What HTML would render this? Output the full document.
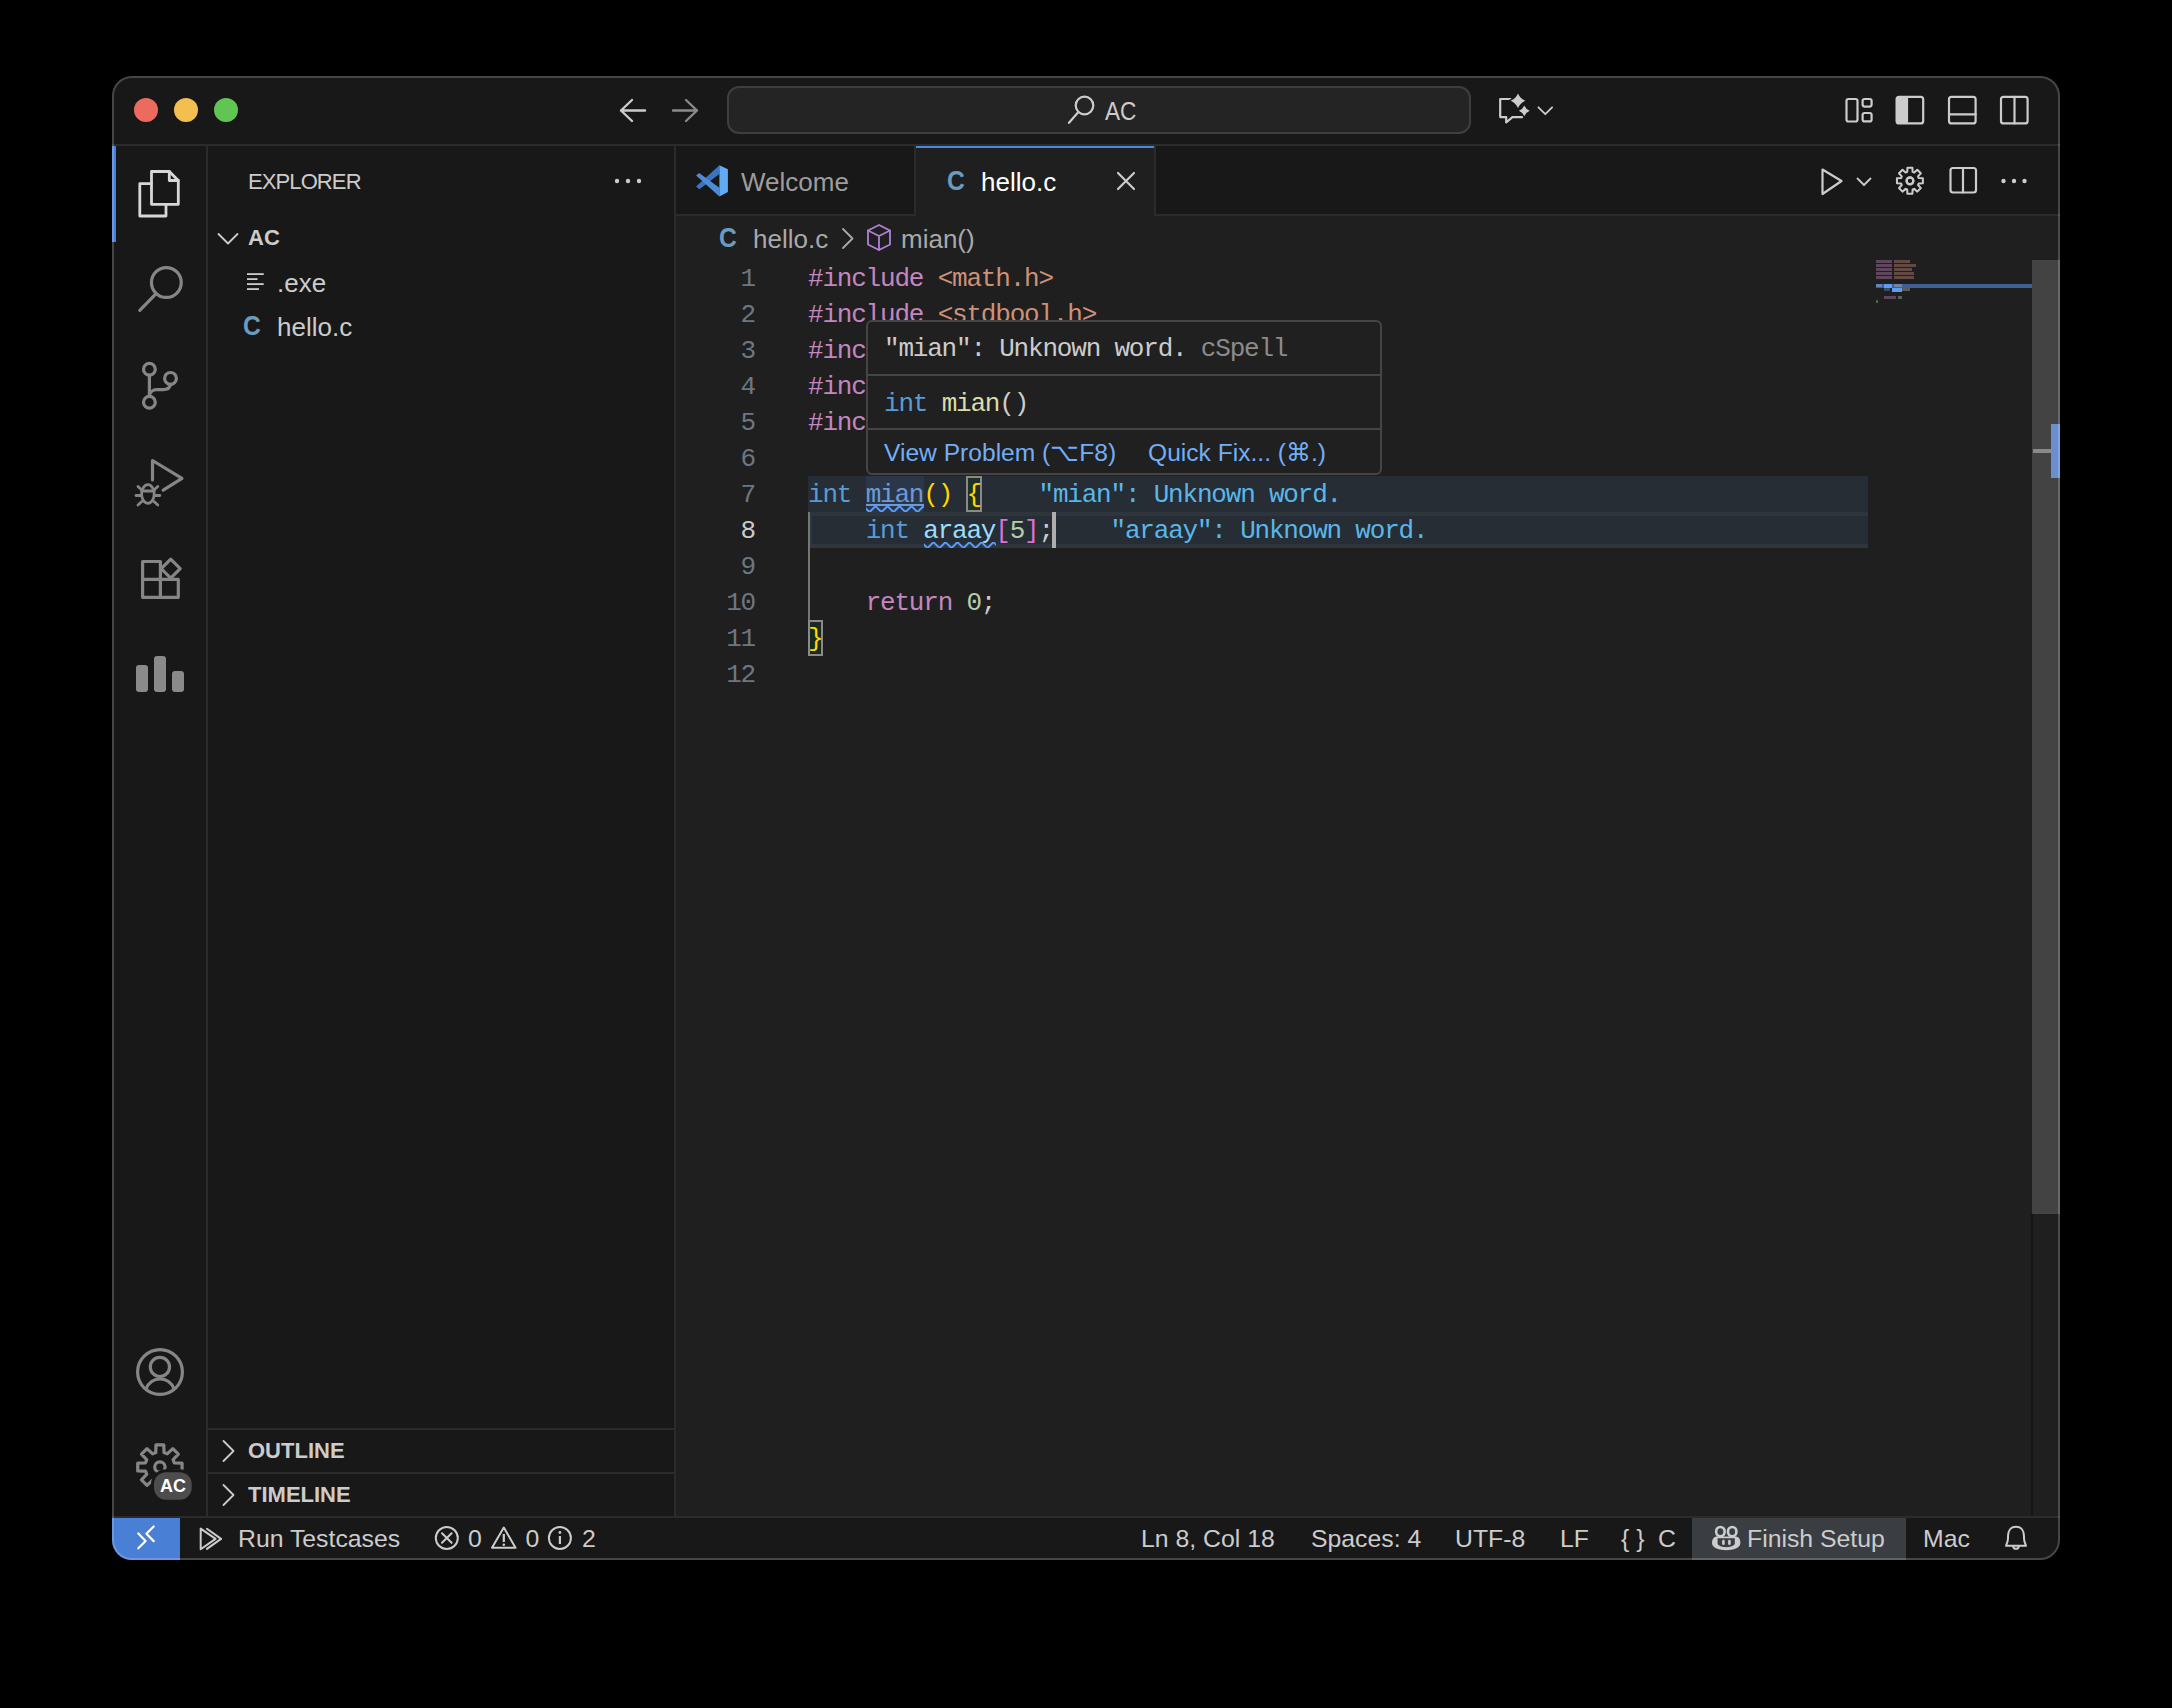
<!DOCTYPE html>
<html><head><meta charset="utf-8">
<style>
*{margin:0;padding:0;box-sizing:border-box}
html,body{width:2172px;height:1708px;background:#000;overflow:hidden;font-family:"Liberation Sans",sans-serif;color:#cccccc}
.a{position:absolute}
#win{position:absolute;left:0;top:0;width:2172px;height:1708px;clip-path:inset(76px 112px 148px 112px round 20px);background:#181818}
#winb{position:absolute;left:112px;top:76px;width:1948px;height:1484px;border-radius:20px;border:2px solid rgba(255,255,255,0.2)}
.mono{font-family:"Liberation Mono",monospace}
.t{position:absolute;white-space:pre;line-height:1}
svg{position:absolute;overflow:visible}
.ic{fill:none;stroke:#cccccc;stroke-width:2.6;stroke-linecap:round;stroke-linejoin:round}
.cl{font-size:26px;letter-spacing:-1.20px;line-height:36px}
.cic{font-weight:bold;font-size:28px;color:#6b9cc0;transform:scaleX(.88);transform-origin:0 0}
.ig{fill:none;stroke:#868686;stroke-width:3;stroke-linecap:round;stroke-linejoin:round}
</style></head><body>
<div id="win">
  <!-- borders -->
  <div class="a" style="left:112px;top:144px;width:1948px;height:2px;background:#2b2b2b"></div>
  <div class="a" style="left:206px;top:146px;width:2px;height:1370px;background:#2b2b2b"></div>
  <div class="a" style="left:674px;top:146px;width:2px;height:1370px;background:#2b2b2b"></div>
  <div class="a" style="left:208px;top:1428px;width:466px;height:2px;background:#2b2b2b"></div>
  <div class="a" style="left:208px;top:1472px;width:466px;height:2px;background:#2b2b2b"></div>
  <!-- editor -->
  <div class="a" style="left:676px;top:146px;width:1384px;height:1370px;background:#1f1f1f"></div>
  <!-- tab bar -->
  <div class="a" style="left:676px;top:146px;width:1384px;height:70px;background:#181818"></div>
  <div class="a" style="left:676px;top:214px;width:1384px;height:2px;background:#2b2b2b"></div>
  <div class="a" style="left:914px;top:146px;width:2px;height:70px;background:#2b2b2b"></div>
  <div class="a" style="left:916px;top:146px;width:238px;height:70px;background:#1f1f1f"></div>
  <div class="a" style="left:916px;top:146px;width:238px;height:2px;background:#4d86e0"></div>
  <div class="a" style="left:1154px;top:146px;width:2px;height:70px;background:#2b2b2b"></div>
  <!-- status bar -->
  <div class="a" style="left:112px;top:1516px;width:1948px;height:2px;background:#2b2b2b"></div>
  <div class="a" style="left:112px;top:1518px;width:68px;height:42px;background:#4a7fd6"></div>
  <div class="a" style="left:1692px;top:1518px;width:214px;height:42px;background:#3a3d41"></div>

  <!-- titlebar -->
  <div class="a" style="left:134px;top:98px;width:24px;height:24px;border-radius:50%;background:#ec6a5e"></div>
  <div class="a" style="left:174px;top:98px;width:24px;height:24px;border-radius:50%;background:#f3bf4f"></div>
  <div class="a" style="left:214px;top:98px;width:24px;height:24px;border-radius:50%;background:#61c554"></div>
  <svg width="2172" height="1708" style="left:0;top:0">
    <g class="ic" style="stroke:#cccccc;stroke-width:2.4">
      <path d="M621 110.5 H645 M632 100 L621 110.5 L632 121"/>
    </g>
    <g class="ic" style="stroke:#8a8a8a;stroke-width:2.4">
      <path d="M673 110.5 H697 M686 100 L697 110.5 L686 121"/>
    </g>
  </svg>
  <div class="a" style="left:727px;top:86px;width:744px;height:48px;border-radius:12px;background:#242424;border:2px solid #3e3e3e"></div>
  <svg width="2172" height="1708" style="left:0;top:0">
    <g class="ic" style="stroke:#cccccc;stroke-width:2.2">
      <circle cx="1084.5" cy="105.5" r="8.8"/>
      <path d="M1078.2 112.3 L1069 122.8"/>
    </g>
  </svg>
  <div class="t" style="left:1105px;top:97.5px;font-size:26px;color:#cccccc;transform:scaleX(.87);transform-origin:0 0">AC</div>

  <svg width="2172" height="1708" style="left:0;top:0">
    <g class="ic" style="stroke-width:2.2">
      <path d="M1510.5 99 H1500.2 V117.1 H1506.2 V122.5 L1512.4 117.1 H1522.5"/>
      <path d="M1538.4 107.3 L1545.3 114.2 L1552.1 107.3" style="stroke-width:1.8"/>
      <rect x="1846.5" y="99" width="11" height="22.5" rx="2"/>
      <rect x="1862.6" y="99" width="9" height="7.6" rx="2"/>
      <rect x="1862.6" y="113" width="9" height="8.4" rx="2"/>
      <rect x="1896.6" y="96.8" width="26.6" height="26.6" rx="2.5"/>
      <rect x="1949" y="96.8" width="26.6" height="26.6" rx="2.5"/>
      <path d="M1949 114.4 H1975.6"/>
      <rect x="2001" y="96.8" width="26.6" height="26.6" rx="2.5"/>
      <path d="M2014.5 96.8 V123.4"/>
    </g>
    <g style="fill:#cccccc">
      <path d="M1518 93.39999999999999 Q1520.22 98.58 1525.4 100.8 Q1520.22 103.02 1518 108.2 Q1515.78 103.02 1510.6 100.8 Q1515.78 98.58 1518 93.39999999999999Z" stroke="#181818" stroke-width="3"/>
      <path d="M1524.3 105.39999999999999 Q1525.9199999999998 109.17999999999999 1529.7 110.8 Q1525.9199999999998 112.42 1524.3 116.2 Q1522.68 112.42 1518.8999999999999 110.8 Q1522.68 109.17999999999999 1524.3 105.39999999999999Z" stroke="#181818" stroke-width="3"/>
      <path d="M1518 93.39999999999999 Q1520.22 98.58 1525.4 100.8 Q1520.22 103.02 1518 108.2 Q1515.78 103.02 1510.6 100.8 Q1515.78 98.58 1518 93.39999999999999Z"/>
      <path d="M1524.3 105.39999999999999 Q1525.9199999999998 109.17999999999999 1529.7 110.8 Q1525.9199999999998 112.42 1524.3 116.2 Q1522.68 112.42 1518.8999999999999 110.8 Q1522.68 109.17999999999999 1524.3 105.39999999999999Z"/>
      <rect x="1896.6" y="96.8" width="11.5" height="26.6" rx="2.5"/>
    </g>
    <g style="fill:#181818;stroke:none">
    </g>
  </svg>
<div class="a" style="left:808px;top:476px;width:1060px;height:36px;background:#262d35"></div>
<div class="a" style="left:808px;top:512px;width:1060px;height:36px;background:#262d35;border:4px solid #2e353d;border-right:none"></div>
<div class="a" style="left:866px;top:476px;width:58px;height:36px;background:#2b3748"></div>
<div class="a" style="left:966px;top:476px;width:16px;height:36px;background:#1f3029;border:2px solid #8a8a8a"></div>
<div class="a" style="left:808px;top:620px;width:15px;height:36px;background:#1a2a1e;border:2px solid #8a8a8a"></div>
<div class="a" style="left:808px;top:512px;width:2px;height:108px;background:#767676"></div>
<div class="t mono cl" style="left:656px;width:99px;text-align:right;top:261px;color:#6e7681">1</div>
<div class="t mono cl" style="left:656px;width:99px;text-align:right;top:297px;color:#6e7681">2</div>
<div class="t mono cl" style="left:656px;width:99px;text-align:right;top:333px;color:#6e7681">3</div>
<div class="t mono cl" style="left:656px;width:99px;text-align:right;top:369px;color:#6e7681">4</div>
<div class="t mono cl" style="left:656px;width:99px;text-align:right;top:405px;color:#6e7681">5</div>
<div class="t mono cl" style="left:656px;width:99px;text-align:right;top:441px;color:#6e7681">6</div>
<div class="t mono cl" style="left:656px;width:99px;text-align:right;top:477px;color:#6e7681">7</div>
<div class="t mono cl" style="left:656px;width:99px;text-align:right;top:513px;color:#cccccc">8</div>
<div class="t mono cl" style="left:656px;width:99px;text-align:right;top:549px;color:#6e7681">9</div>
<div class="t mono cl" style="left:656px;width:99px;text-align:right;top:585px;color:#6e7681">10</div>
<div class="t mono cl" style="left:656px;width:99px;text-align:right;top:621px;color:#6e7681">11</div>
<div class="t mono cl" style="left:656px;width:99px;text-align:right;top:657px;color:#6e7681">12</div>
<div class="t mono cl" style="left:808px;top:261px"><span style="color:#c586c0">#include</span><span style="color:#cccccc"> </span><span style="color:#ce9178">&lt;math.h&gt;</span></div>
<div class="t mono cl" style="left:808px;top:297px"><span style="color:#c586c0">#include</span><span style="color:#cccccc"> </span><span style="color:#ce9178">&lt;stdbool.h&gt;</span></div>
<div class="t mono cl" style="left:808px;top:333px"><span style="color:#c586c0">#include</span><span style="color:#cccccc"> </span><span style="color:#ce9178">&lt;stdio.h&gt;</span></div>
<div class="t mono cl" style="left:808px;top:369px"><span style="color:#c586c0">#include</span><span style="color:#cccccc"> </span><span style="color:#ce9178">&lt;stdlib.h&gt;</span></div>
<div class="t mono cl" style="left:808px;top:405px"><span style="color:#c586c0">#include</span><span style="color:#cccccc"> </span><span style="color:#ce9178">&lt;string.h&gt;</span></div>
<div class="t mono cl" style="left:808px;top:477px"><span style="color:#569cd6">int</span><span style="color:#cccccc"> </span><span style="color:#6b9bd6">mian</span><span style="color:#ffd700">()</span><span style="color:#cccccc"> </span><span style="color:#ffd700">{</span><span style="color:#cccccc">    </span><span style="color:#59b7e9">"mian": Unknown word.</span></div>
<div class="t mono cl" style="left:808px;top:513px"><span style="color:#cccccc">    </span><span style="color:#569cd6">int</span><span style="color:#cccccc"> </span><span style="color:#9cdcfe">araay</span><span style="color:#da70d6">[</span><span style="color:#b5cea8">5</span><span style="color:#da70d6">]</span><span style="color:#cccccc">;</span><span style="color:#cccccc">    </span><span style="color:#59b7e9">"araay": Unknown word.</span></div>
<div class="t mono cl" style="left:808px;top:585px"><span style="color:#cccccc">    </span><span style="color:#c586c0">return</span><span style="color:#cccccc"> </span><span style="color:#b5cea8">0</span><span style="color:#cccccc">;</span></div>
<div class="t mono cl" style="left:808px;top:621px"><span style="color:#ffd700">}</span></div>
<div class="a" style="left:866px;top:504px;width:58px;height:2px;background:#6b9ad8"></div>
<svg width="2172" height="1708" style="left:0;top:0"><defs><pattern id="sq" x="866" y="506" width="12" height="6" patternUnits="userSpaceOnUse"><g fill="#5c9cf8"><polygon points="11,0 5,6 2.2,6 8.2,0"/><polygon points="8,0 12,4 12,1.2 10.8,0"/><polygon points="0,4 2,6 4.8,6 0,1.2"/></g></pattern>
<pattern id="sq2" x="924" y="542" width="12" height="6" patternUnits="userSpaceOnUse"><g fill="#5c9cf8"><polygon points="11,0 5,6 2.2,6 8.2,0"/><polygon points="8,0 12,4 12,1.2 10.8,0"/><polygon points="0,4 2,6 4.8,6 0,1.2"/></g></pattern></defs>
<rect x="866" y="506" width="58" height="6" fill="url(#sq)"/><rect x="924" y="542" width="72" height="6" fill="url(#sq2)"/></svg>
<div class="a" style="left:1052px;top:512px;width:4px;height:36px;background:#aeafad"></div>
<div class="a" style="left:866px;top:320px;width:516px;height:155px;background:#202020;border:2px solid #454545;border-radius:6px"></div>
<div class="a" style="left:868px;top:374px;width:512px;height:2px;background:#454545"></div>
<div class="a" style="left:868px;top:428px;width:512px;height:2px;background:#454545"></div>
<div class="t mono cl" style="left:884px;top:330.5px;color:#cccccc">"mian": Unknown word. <span style="color:#8b8b8b">cSpell</span></div>
<div class="t mono cl" style="left:884px;top:385.5px"><span style="color:#569cd6">int</span> <span style="color:#dcdcaa">mian</span><span style="color:#cccccc">()</span></div>
<div class="t" style="left:884px;top:441px;font-size:24.6px;color:#72aef8">View Problem (⌥F8)</div>
<div class="t" style="left:1148px;top:441px;font-size:24.6px;color:#72aef8">Quick Fix... (⌘.)</div>
<div class="t" style="left:248px;top:170.5px;font-size:22px;letter-spacing:-0.9px;color:#cccccc">EXPLORER</div>
<svg width="2172" height="1708" style="left:0;top:0"><g fill="#cccccc">
<circle cx="617" cy="181" r="2.2"/><circle cx="628" cy="181" r="2.2"/><circle cx="639" cy="181" r="2.2"/>
</g>
<g class="ic" style="stroke-width:1.8">
<path d="M218.5 234 L228 243.5 L237.5 234"/>
<path d="M223.5 1441 L233.5 1451 L223.5 1461"/>
<path d="M223.5 1485 L233.5 1495 L223.5 1505"/>
</g>
<g fill="#cccccc">
<rect x="247" y="273.2" width="16.7" height="1.8"/>
<rect x="247" y="278.2" width="10.5" height="1.8"/>
<rect x="247" y="283.2" width="16.7" height="1.8"/>
<rect x="247" y="288.2" width="12" height="1.8"/>
</g>
</svg>
<div class="t" style="left:248px;top:227.3px;font-size:22px;font-weight:bold;color:#cccccc">AC</div>
<div class="t" style="left:277px;top:269.8px;font-size:26px;color:#cccccc">.exe</div>
<div class="t cic" style="left:242.5px;top:311.5px">C</div>
<div class="t" style="left:277px;top:313.8px;font-size:26px;color:#cccccc">hello.c</div>
<div class="t" style="left:248px;top:1440.3px;font-size:22px;font-weight:bold;color:#cccccc">OUTLINE</div>
<div class="t" style="left:248px;top:1484.4px;font-size:22px;font-weight:bold;color:#cccccc">TIMELINE</div>
<div class="t" style="left:741px;top:169px;font-size:26px;color:#9d9d9d">Welcome</div>
<div class="t cic" style="left:947px;top:167px">C</div>
<div class="t" style="left:981px;top:169px;font-size:26px;color:#ffffff">hello.c</div>
<svg width="2172" height="1708" style="left:0;top:0">
<path d="M719.4 165.2 L696.1 186.6 L699.4 189.3 L719.4 174 Z" fill="#3a74bf"/>
<path d="M719.4 196.6 L696.1 175.5 L699.2 173 L719.4 187.8 Z" fill="#4c8bd8"/>
<path d="M719.4 165.2 L727.9 169.3 L727.9 192 L719.4 196.6 Z" fill="#64aaf2"/>
<g class="ic" style="stroke:#cccccc;stroke-width:2.2"><path d="M1118 173 L1134 189 M1134 173 L1118 189"/></g>
</svg>
<div class="t cic" style="left:719px;top:223.5px">C</div>
<div class="t" style="left:753px;top:226px;font-size:26px;color:#a9a9a9">hello.c</div>
<div class="t" style="left:901px;top:226px;font-size:26px;color:#a9a9a9">mian()</div>
<svg width="2172" height="1708" style="left:0;top:0">
<g class="ic" style="stroke:#a9a9a9;stroke-width:1.8"><path d="M843 229 L852.5 238.5 L843 248"/></g>
<g class="ic" style="stroke:#b180d7;stroke-width:1.8">
<path d="M879 225 L890 230.5 L890 244.5 L879 250 L868 244.5 L868 230.5 Z"/>
<path d="M868 230.5 L879 236 L890 230.5 M879 236 V250"/>
</g>
</svg>
<svg width="2172" height="1708" style="left:0;top:0">
<g class="ic" style="stroke-width:2.2">
<path d="M1822.5 169.5 L1841.5 181 L1822.5 194 Z"/>
<path d="M1857.5 178.5 L1864 185 L1870.5 178.5" style="stroke-width:1.8"/>
<rect x="1950.5" y="168" width="25.5" height="24.5" rx="2.5"/>
<path d="M1963 168 V192.5"/>
<circle cx="1910" cy="181" r="3.4"/>
</g>
<g fill="#cccccc"><circle cx="2003.5" cy="181" r="2.2"/><circle cx="2014" cy="181" r="2.2"/><circle cx="2024.5" cy="181" r="2.2"/></g>
</svg>
<svg width="2172" height="1708" style="left:0;top:0">
<g class="ic" style="stroke:#d7d7d7;stroke-width:2.8">
  <path d="M151.5 183.7 H139.8 V216 H166 V204.5"/>
  <path d="M151.5 171.5 H169.3 L178.3 180.5 V204.3 H151.5 Z"/>
  <path d="M169.3 171.5 V180.5 H178.3"/>
</g>
<g class="ig" style="stroke-width:3.2">
  <circle cx="166.35" cy="282.5" r="14.9"/>
  <path d="M139.8 310.3 L155.6 294.2"/>
  <circle cx="149.4" cy="369.2" r="5.9"/>
  <circle cx="170.5" cy="378.4" r="5.9"/>
  <circle cx="149.4" cy="402.2" r="5.9"/>
  <path d="M149.4 375.1 V396.3"/>
  <path d="M170.5 384.3 C170 388.2 167 389.7 163 389.7 H157 C152.5 389.7 149.6 392.5 149.4 396"/>
  <path d="M152.5 480 V460.5 L182 478.3 L163.2 490.2"/>
  <path d="M142.6 561.5 H160.4 V597.3 H142.6 Z M142.6 579.4 H178.3 V597.3 H160.4"/>
  <path d="M170.7 559.2 L180.2 568.7 L170.7 578.2 L161.2 568.7 Z"/>
  <circle cx="160" cy="1372" r="22.4"/>
  <circle cx="159.9" cy="1366.9" r="9.6"/>
  <path d="M146.3 1388.5 A14.6 14.6 0 0 1 173.8 1388.5"/>
</g>
<g class="ig" style="stroke-width:2.8">
  <ellipse cx="147.9" cy="494" rx="6.3" ry="9.3"/>
  <path d="M141.6 491 H154.2"/>
  <path d="M138 486.5 L141.8 490 M157.8 486.5 L154 490 M136 495.5 H141 M154.8 495.5 H159.8 M138 505 L141.8 501.5 M157.8 505 L154 501.5"/>
</g>
<g fill="#8a8a8a">
  <rect x="136" y="665" width="12" height="27" rx="3"/>
  <rect x="154" y="656" width="12" height="36" rx="3"/>
  <rect x="172" y="671" width="12" height="21" rx="3"/>
</g>
<g class="ig" style="stroke-width:3.2">
  <path d="M155.77 1452.58 L155.99 1444.84 L163.81 1444.84 L164.03 1452.58 L167.17 1453.88 L172.81 1448.57 L178.33 1454.09 L173.02 1459.73 L174.32 1462.87 L182.06 1463.09 L182.06 1470.91 L174.32 1471.13 L173.02 1474.27 L178.33 1479.91 L172.81 1485.43 L167.17 1480.12 L164.03 1481.42 L163.81 1489.16 L155.99 1489.16 L155.77 1481.42 L152.63 1480.12 L146.99 1485.43 L141.47 1479.91 L146.78 1474.27 L145.48 1471.13 L137.74 1470.91 L137.74 1463.09 L145.48 1462.87 L146.78 1459.73 L141.47 1454.09 L146.99 1448.57 L152.63 1453.88Z"/>
  <circle cx="159.9" cy="1467" r="5.2"/>
</g>
<rect x="151" y="1469.2" width="43.7" height="33.6" rx="15" fill="#181818"/>
<rect x="154" y="1472.2" width="37.7" height="27.6" rx="12" fill="#4d4d4d"/>
<g class="ic" style="stroke-width:2">
  <path d="M1907.21 171.90 L1907.38 167.74 L1912.42 167.74 L1912.59 171.90 L1914.22 172.58 L1917.28 169.76 L1920.84 173.32 L1918.02 176.38 L1918.70 178.01 L1922.86 178.18 L1922.86 183.22 L1918.70 183.39 L1918.02 185.02 L1920.84 188.08 L1917.28 191.64 L1914.22 188.82 L1912.59 189.50 L1912.42 193.66 L1907.38 193.66 L1907.21 189.50 L1905.58 188.82 L1902.52 191.64 L1898.96 188.08 L1901.78 185.02 L1901.10 183.39 L1896.94 183.22 L1896.94 178.18 L1901.10 178.01 L1901.78 176.38 L1898.96 173.32 L1902.52 169.76 L1905.58 172.58Z"/>
  <circle cx="1909.9" cy="180.7" r="3.4"/>
</g>
</svg>
<div class="t" style="left:160px;top:1477px;font-size:18px;font-weight:bold;color:#ffffff">AC</div>
<svg width="2172" height="1708" style="left:0;top:0">
<g class="ic" style="stroke:#ffffff;stroke-width:2.2">
  <path d="M138.3 1533.5 L145.6 1541 L138.3 1548.3 M153.7 1526.5 L146.4 1533.8 L153.7 1541.1"/>
</g>
<g class="ic" style="stroke-width:2">
  <path d="M200.7 1528.6 V1549.3 L215.6 1538.9 Z"/>
  <path d="M206.9 1528.8 L221.1 1538.9 L206.9 1548.9"/>
  <circle cx="446.8" cy="1538" r="11"/>
  <path d="M442 1533.2 L451.6 1542.8 M451.6 1533.2 L442 1542.8"/>
  <path d="M503.8 1527.5 L515.5 1547.8 H492 Z"/>
  <circle cx="559.9" cy="1538" r="11"/>
  <path d="M2016 1526.8 C2010.5 1526.8 2008 1531 2008 1536 V1538.5 C2008 1541 2007 1543.5 2006 1545.8 H2026 C2025 1543.5 2024 1541 2024 1538.5 V1536 C2024 1531 2021.5 1526.8 2016 1526.8 Z"/>
  <path d="M2013.2 1546.3 C2013.5 1549.6 2018.5 1549.6 2018.8 1546.3"/>
</g>
<g fill="#cccccc">
  <rect x="502.7" y="1534" width="2.2" height="8"/><circle cx="503.8" cy="1544.7" r="1.3"/>
  <rect x="558.8" y="1536" width="2.2" height="8"/><circle cx="559.9" cy="1532.5" r="1.4"/>
</g>
<g fill="#cccccc"><path d="M1712 1543 C1712 1538.5 1714.5 1536.5 1717 1536.5 H1735.4 C1738 1536.5 1740.4 1538.5 1740.4 1543 C1740.4 1548 1733 1550.2 1726.2 1550.2 C1719.4 1550.2 1712 1548 1712 1543 Z"/></g>
<g fill="#3a3d41"><path d="M1717.6 1538.3 H1734.8 V1543.3 C1734.8 1545.8 1730 1547.2 1726.2 1547.2 C1722.4 1547.2 1717.6 1545.8 1717.6 1543.3 Z"/></g>
<g fill="#3a3d41" stroke="#cccccc" stroke-width="2.6"><rect x="1716.2" y="1527" width="8.4" height="9.3" rx="4.2"/><rect x="1728" y="1527" width="8.4" height="9.3" rx="4.2"/></g>
<g fill="#cccccc"><rect x="1722.1" y="1539.8" width="2.6" height="5.2" rx="1.3"/><rect x="1728.1" y="1539.8" width="2.6" height="5.2" rx="1.3"/></g>
</svg>
<div class="t" style="left:238px;top:1527px;font-size:24.8px;color:#cccccc">Run Testcases</div>
<div class="t" style="left:468px;top:1527px;font-size:24.8px;color:#cccccc">0</div>
<div class="t" style="left:525.5px;top:1527px;font-size:24.8px;color:#cccccc">0</div>
<div class="t" style="left:582px;top:1527px;font-size:24.8px;color:#cccccc">2</div>
<div class="t" style="left:1141px;top:1527px;font-size:24.8px;color:#cccccc">Ln 8, Col 18</div>
<div class="t" style="left:1311px;top:1527px;font-size:24.8px;color:#cccccc">Spaces: 4</div>
<div class="t" style="left:1455px;top:1527px;font-size:24.8px;color:#cccccc">UTF-8</div>
<div class="t" style="left:1560px;top:1527px;font-size:24.8px;color:#cccccc">LF</div>
<div class="t" style="left:1621px;top:1527px;font-size:24.8px;color:#cccccc">{ }</div>
<div class="t" style="left:1658px;top:1527px;font-size:24.8px;color:#cccccc">C</div>
<div class="t" style="left:1747px;top:1527px;font-size:24.8px;color:#cccccc">Finish Setup</div>
<div class="t" style="left:1923px;top:1527px;font-size:24.8px;color:#cccccc">Mac</div>
<div class="a" style="left:1876px;top:284px;width:156px;height:4px;background:#3f5f96"></div>
<svg width="2172" height="1708" style="left:0;top:0"><g>
<rect x="1876" y="260" width="16" height="3" fill="#c586c0" opacity="0.38"/>
<rect x="1894" y="260" width="16" height="3" fill="#ce9178" opacity="0.38"/>
<rect x="1876" y="264" width="16" height="3" fill="#c586c0" opacity="0.38"/>
<rect x="1894" y="264" width="22" height="3" fill="#ce9178" opacity="0.38"/>
<rect x="1876" y="268" width="16" height="3" fill="#c586c0" opacity="0.38"/>
<rect x="1894" y="268" width="18" height="3" fill="#ce9178" opacity="0.38"/>
<rect x="1876" y="272" width="16" height="3" fill="#c586c0" opacity="0.38"/>
<rect x="1894" y="272" width="20" height="3" fill="#ce9178" opacity="0.38"/>
<rect x="1876" y="276" width="16" height="3" fill="#c586c0" opacity="0.38"/>
<rect x="1894" y="276" width="20" height="3" fill="#ce9178" opacity="0.38"/>
<rect x="1876" y="284" width="6" height="3" fill="#8fb4e8" opacity="0.45"/>
<rect x="1884" y="284" width="8" height="4" fill="#5b9cf8"/>
<rect x="1894" y="284" width="8" height="3" fill="#cccccc" opacity="0.35"/>
<rect x="1884" y="288" width="6" height="3" fill="#569cd6" opacity="0.38"/>
<rect x="1892" y="288" width="10" height="4" fill="#5b9cf8"/>
<rect x="1902" y="288" width="8" height="3" fill="#cccccc" opacity="0.35"/>
<rect x="1884" y="296" width="12" height="3" fill="#c586c0" opacity="0.38"/>
<rect x="1898" y="296" width="4" height="3" fill="#b5cea8" opacity="0.38"/>
<rect x="1876" y="300" width="2" height="3" fill="#cccccc" opacity="0.35"/>
</g></svg>
<div class="a" style="left:2031px;top:1214px;width:2px;height:302px;background:#151515"></div>
<div class="a" style="left:2032px;top:260px;width:28px;height:954px;background:#434343"></div>
<div class="a" style="left:2033px;top:449px;width:27px;height:4px;background:#8a8a8a"></div>
<div class="a" style="left:2051px;top:424px;width:9px;height:54px;background:#6a8fd0"></div>
  <!-- CONTENT -->
</div>
<div class="a" style="left:112px;top:146px;width:4px;height:96px;background:#4a80db"></div>
<div id="winb"></div>
</body></html>
